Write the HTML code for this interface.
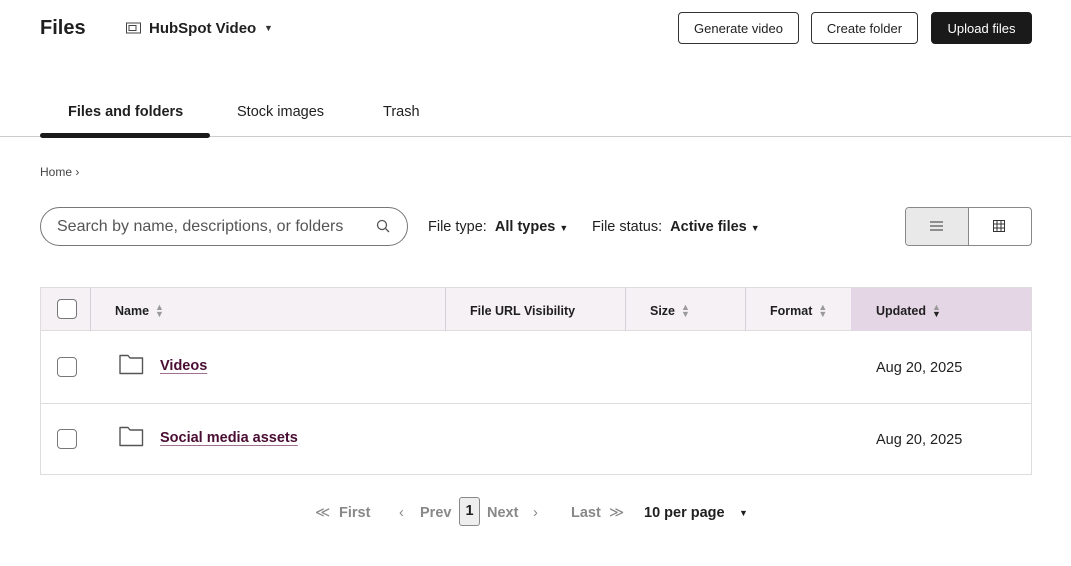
<!DOCTYPE html><html><head><style>
*{box-sizing:border-box;margin:0;padding:0}
body{width:1071px;height:566px;background:#fff;font-family:"Liberation Sans",sans-serif;color:#1f1f1f;position:relative;overflow:hidden}
.a{position:absolute}
.btn{position:absolute;top:12px;height:32px;border:1px solid #333;border-radius:4px;font-size:13px;display:flex;align-items:center;justify-content:center;background:#fff}
.cb{position:absolute;width:20px;height:20px;border:1.5px solid #777;border-radius:4px;background:#fff}
.th{position:absolute;top:287px;height:44px;font-size:12.5px;font-weight:bold;display:flex;align-items:center;padding-left:24px;padding-top:3px;border-right:1px solid #d5d0d5}
.sort{display:inline-block;margin-left:6px;font-size:9px;line-height:7px;color:#999;vertical-align:middle}
.lnk{color:#4a0d33;font-weight:bold;font-size:14.5px;text-decoration:underline;text-decoration-color:#a07090;text-underline-offset:3px}
.pg{position:absolute;top:505px;font-size:14.5px;font-weight:bold;color:#888}
</style></head><body>
<div class="a" style="left:40px;top:17px;font-size:20px;font-weight:bold">Files</div>
<svg class="a" style="left:126px;top:22px" width="15" height="12" viewBox="0 0 15 12"><rect x="0.5" y="1" width="14" height="10" fill="none" stroke="#444"/><rect x="3" y="3.5" width="7" height="5" fill="none" stroke="#444"/></svg>
<div class="a" style="left:149px;top:20px;font-size:15px;font-weight:bold">HubSpot Video</div>
<div class="a" style="left:264px;top:23px;font-size:9px;color:#333">▼</div>
<div class="btn" style="left:678px;width:121px">Generate video</div>
<div class="btn" style="left:811px;width:107px">Create folder</div>
<div class="btn" style="left:931px;width:101px;background:#1a1a1a;color:#fff;border-color:#1a1a1a">Upload files</div>
<div class="a" style="left:68px;top:104px;font-size:14.5px;font-weight:bold">Files and folders</div>
<div class="a" style="left:237px;top:104px;font-size:14.5px">Stock images</div>
<div class="a" style="left:383px;top:104px;font-size:14.5px">Trash</div>
<div class="a" style="left:0;top:136px;width:1071px;height:1px;background:#ccc"></div>
<div class="a" style="left:40px;top:133px;width:170px;height:5px;border-radius:3px;background:#1a1a1a"></div>
<div class="a" style="left:40px;top:165px;font-size:12px;color:#444">Home ›</div>
<div class="a" style="left:40px;top:207px;width:368px;height:39px;border:1px solid #777;border-radius:20px"></div>
<div class="a" style="left:57px;top:218px;font-size:16px;color:#555">Search by name, descriptions, or folders</div>
<svg class="a" style="left:376px;top:219px" width="14" height="14" viewBox="0 0 14 14"><circle cx="6" cy="6" r="4.5" fill="none" stroke="#555" stroke-width="1.3"/><path d="M9.5 9.5L13 13" stroke="#555" stroke-width="1.3"/></svg>
<div class="a" style="left:428px;top:219px;font-size:14.5px">File type: <b>&nbsp;All types</b> <span style="font-size:9px">▼</span></div>
<div class="a" style="left:592px;top:219px;font-size:14.5px">File status: <b>&nbsp;Active files</b> <span style="font-size:9px">▼</span></div>
<div class="a" style="left:905px;top:207px;width:127px;height:39px;border:1px solid #888;border-radius:4px;overflow:hidden"><div style="width:63px;height:100%;background:#e9e9e9;border-right:1px solid #888"></div></div>
<svg class="a" style="left:930px;top:221px" width="13" height="10"><path d="M0 1h13M0 5h13M0 9h13" stroke="#333"/></svg>
<svg class="a" style="left:993px;top:220px" width="12" height="12"><rect x="0.5" y="0.5" width="11" height="11" fill="none" stroke="#333"/><path d="M4 0v12M8 0v12M0 4h12M0 8h12" stroke="#333"/></svg>
<div class="a" style="left:40px;top:287px;width:992px;height:188px;border:1px solid #ddd"></div>
<div class="a" style="left:41px;top:288px;width:990px;height:43px;background:#f5f1f5;border-bottom:1px solid #ddd"></div>
<div class="a" style="left:851px;top:288px;width:180px;height:43px;background:#e5d6e5"></div>
<div class="th" style="left:40px;width:51px;border-right:1px solid #d5d0d5"></div>
<div class="cb" style="left:57px;top:299px"></div>
<div class="th" style="left:91px;width:355px">Name<span class="sort">▲<br>▼</span></div>
<div class="th" style="left:446px;width:180px">File URL Visibility</div>
<div class="th" style="left:626px;width:120px">Size<span class="sort">▲<br>▼</span></div>
<div class="th" style="left:746px;width:106px;border-right:none">Format<span class="sort">▲<br>▼</span></div>
<div class="th" style="left:852px;width:180px;border-right:none">Updated<span class="sort">▲<br><span style="color:#222">▼</span></span></div>
<div class="a" style="left:41px;top:403px;width:990px;height:1px;background:#ddd"></div>
<div class="cb" style="left:57px;top:357px"></div>
<div class="cb" style="left:57px;top:429px"></div>
<svg class="a" style="left:119px;top:354px" width="25" height="21"><path d="M1 1.5h8l2 2.5h12.5v15.5h-22.5z" fill="none" stroke="#555" stroke-width="1.4" stroke-linejoin="round"/></svg>
<svg class="a" style="left:119px;top:426px" width="25" height="21"><path d="M1 1.5h8l2 2.5h12.5v15.5h-22.5z" fill="none" stroke="#555" stroke-width="1.4" stroke-linejoin="round"/></svg>
<div class="a lnk" style="left:160px;top:358px">Videos</div>
<div class="a lnk" style="left:160px;top:430px">Social media assets</div>
<div class="a" style="left:876px;top:360px;font-size:14.5px">Aug 20, 2025</div>
<div class="a" style="left:876px;top:432px;font-size:14.5px">Aug 20, 2025</div>
<div class="pg" style="left:315px;font-weight:normal">≪</div>
<div class="pg" style="left:339px">First</div>
<div class="pg" style="left:399px;font-weight:normal">‹</div>
<div class="pg" style="left:420px">Prev</div>
<div class="a" style="left:459px;top:497px;width:21px;height:29px;border:1px solid #888;border-radius:3px;background:#eee;font-size:14.5px;font-weight:bold;text-align:center;line-height:27px">1</div>
<div class="pg" style="left:487px">Next</div>
<div class="pg" style="left:533px;font-weight:normal">›</div>
<div class="pg" style="left:571px">Last</div>
<div class="pg" style="left:609px;font-weight:normal">≫</div>
<div class="a" style="left:644px;top:505px;font-size:14.5px;font-weight:bold">10 per page</div>
<div class="a" style="left:739px;top:508px;font-size:9px">▼</div>
</body></html>
